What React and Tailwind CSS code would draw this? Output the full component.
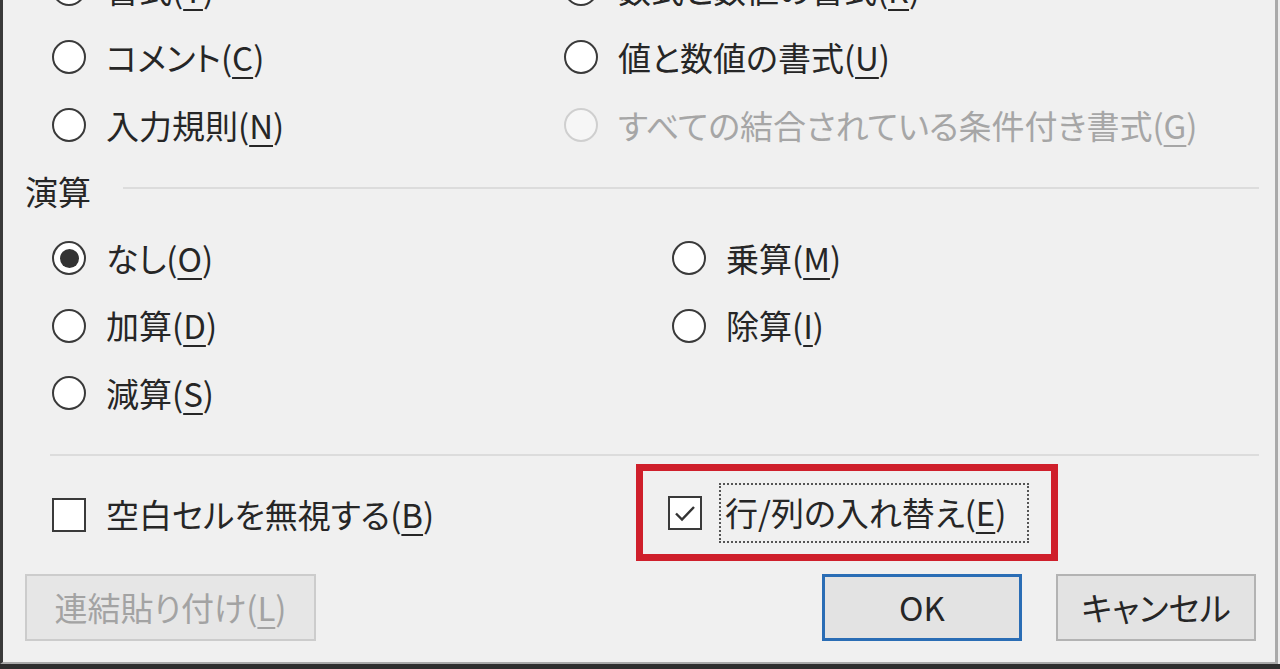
import React from "react";

const font = "font-['Segoe_UI','Noto_Sans_CJK_JP',sans-serif] [font-feature-settings:'palt']";

const Key = ({ k }) => (
  <>
    (<span className="underline decoration-[2px] underline-offset-[6px]">{k}</span>)
  </>
);

const Radio = ({ label, k, checked, disabled }) => (
  <div className="flex items-center gap-[20px] h-full">
    <div
      className={
        "w-[34px] h-[34px] rounded-full border-[2.5px] flex items-center justify-center shrink-0 " +
        (disabled ? "border-[#cfcfcf] bg-[#f6f6f6]" : "border-[#3a3a3a] bg-white")
      }
    >
      {checked && <div className="w-[19px] h-[19px] rounded-full bg-[#333]" />}
    </div>
    <span className={"text-[33px] leading-none whitespace-nowrap " + (disabled ? "text-[#a6a6a6]" : "text-[#262626]")}>
      {label}
      <Key k={k} />
    </span>
  </div>
);

const Box = ({ checked }) => (
  <div className="w-[34px] h-[34px] border-[2.5px] border-[#3a3a3a] bg-white flex items-center justify-center shrink-0">
    {checked && (
      <svg width="26" height="26" viewBox="0 0 26 26">
        <path d="M4 13.5 L10 19.5 L22 7" fill="none" stroke="#333" strokeWidth="2.4" />
      </svg>
    )}
  </div>
);

const pasteRows = [
  [{ label: "書式", k: "T" }, { label: "数式と数値の書式", k: "R" }],
  [{ label: "コメント", k: "C" }, { label: "値と数値の書式", k: "U" }],
  [{ label: "入力規則", k: "N" }, { label: "すべての結合されている条件付き書式", k: "G", disabled: true }],
];

const opRows = [
  [{ label: "なし", k: "O", checked: true }, { label: "乗算", k: "M" }],
  [{ label: "加算", k: "D" }, { label: "除算", k: "I" }],
  [{ label: "減算", k: "S" }, null],
];

export default function App() {
  return (
    <div className={"w-[1280px] h-[669px] overflow-hidden bg-[#ececec] flex flex-col " + font}>
      <div className="h-[664px] w-[1278px] bg-[#f0f0f0] border-l-[3px] border-l-[#3a3a3a] border-r-[3px] border-r-[#a9a9a9] border-b-[2px] border-b-[#a9a9a9] overflow-hidden">
        <div className="mt-[-45px]">
          {pasteRows.map((row, i) => (
            <div key={i} className="h-[68px] grid grid-cols-[512px_1fr] pl-[49px]">
              {row.map((r) => (
                <Radio key={r.k} {...r} />
              ))}
            </div>
          ))}
        </div>

        <div className="h-[65px] flex items-center pl-[22px] pr-[16px]">
          <span className="text-[33px] leading-none text-[#262626]">演算</span>
          <div className="flex-1 h-[2px] bg-[#dcdcdc] ml-[32px] mb-[8px]" />
        </div>

        <div>
          {opRows.map((row, i) => (
            <div key={i} className={"grid grid-cols-[620px_1fr] pl-[49px] " + (i === 1 ? "h-[67px]" : "h-[68px]")}>
              {row.map((r, j) => (r ? <Radio key={r.k} {...r} /> : <div key={j} />))}
            </div>
          ))}
        </div>

        <div className="h-[29px] pl-[47px] pr-[16px] flex items-end">
          <div className="flex-1 h-[2px] bg-[#dcdcdc]" />
        </div>

        <div className="flex mt-[8px] pl-[49px]">
          <div className="w-[584px] flex items-center gap-[20px] pt-[4px]">
            <Box />
            <span className="text-[33px] leading-none text-[#262626] whitespace-nowrap">
              空白セルを無視する
              <Key k="B" />
            </span>
          </div>
          <div className="w-[422px] h-[97px] border-[7px] border-[#cf1f2b] flex items-center pl-[25px] gap-[17px]">
            <Box checked />
            <div className="h-[60px] w-[310px] border-[2px] border-dotted border-[#555] flex items-center pl-[4px]">
              <span className="text-[33px] leading-none text-[#262626] whitespace-nowrap">
                行/列の入れ替え
                <Key k="E" />
              </span>
            </div>
          </div>
        </div>

        <div className="flex mt-[13px] pl-[22px]">
          <div className="w-[291px] h-[67px] border-[2px] border-[#cccccc] bg-[#e6e6e6] flex items-center justify-center text-[33px] leading-none text-[#a3a3a3]">
            <span>
              連結貼り付け
              <Key k="L" />
            </span>
          </div>
          <div className="ml-[506px] w-[200px] h-[67px] border-[3px] border-[#2a6db5] bg-[#e3e3e3] flex items-center justify-center text-[33px] leading-none text-[#262626]">
            OK
          </div>
          <div className="ml-[34px] w-[200px] h-[67px] border-[2px] border-[#b3b3b3] bg-[#e3e3e3] flex items-center justify-center text-[33px] leading-none text-[#262626]">
            キャンセル
          </div>
        </div>
      </div>
      <div className="flex-1 bg-[#2e2e2e]" />
    </div>
  );
}
